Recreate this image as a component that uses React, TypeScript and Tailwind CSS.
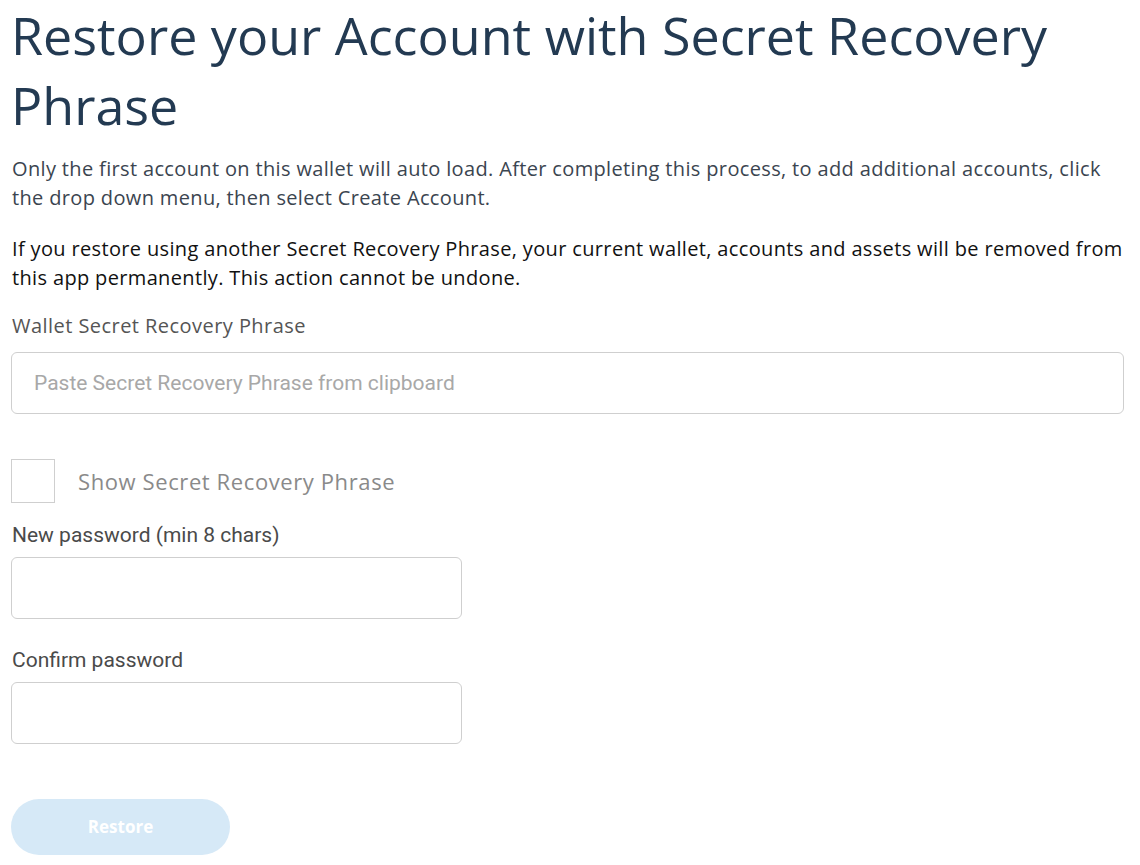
export default function App() {
  return (
    <div className="min-h-screen bg-white pl-[11px] pr-3 pt-0 font-['Open_Sans',sans-serif]">
      <h1 className="text-[52px] leading-[70px] font-normal text-[#233a52]">
        Restore your Account with Secret Recovery Phrase
      </h1>

      <p className="mt-[14px] text-[20px] leading-[29px] tracking-[0.35px] text-[#3b4550] pl-px">
        Only the first account on this wallet will auto load. After completing this process, to add additional
        accounts, click the drop down menu, then select Create Account.
      </p>
      <p className="mt-[22px] text-[20px] leading-[29px] tracking-[0.35px] text-[#111] pl-px">
        If you restore using another Secret Recovery Phrase, your current wallet, accounts and assets will be removed
        from this app permanently. This action cannot be undone.
      </p>

      <label className="block mt-[22px] text-[20px] leading-[24px] tracking-[0.45px] text-[#555] pl-px">
        Wallet Secret Recovery Phrase
      </label>
      <input
        type="text"
        placeholder="Paste Secret Recovery Phrase from clipboard"
        className="mt-[14px] block w-[1113px] h-[62px] rounded-md border border-[#cfcfcf] px-[22px] font-['Roboto',sans-serif] text-[21px] placeholder:text-[#a8a8a8] outline-none"
      />

      <div className="mt-[45px] flex items-center gap-[23px]">
        <span className="block w-11 h-11 border border-[#cfcfcf] bg-white" />
        <span className="text-[22px] tracking-[0.6px] text-[#8a8a8a]">Show Secret Recovery Phrase</span>
      </div>

      <div className="font-['Roboto',sans-serif]">
        <label className="block mt-[20px] text-[21px] leading-[24px] text-[#4a4a4a] pl-px">
          New password (min 8 chars)
        </label>
        <input
          type="password"
          className="mt-[10px] block w-[451px] h-[62px] rounded-md border border-[#cfcfcf] px-4 outline-none"
        />

        <label className="block mt-[29px] text-[21px] leading-[24px] text-[#4a4a4a] pl-px">Confirm password</label>
        <input
          type="password"
          className="mt-[10px] block w-[451px] h-[62px] rounded-md border border-[#cfcfcf] px-4 outline-none"
        />
      </div>

      <button
        type="button"
        disabled
        className="mt-[55px] block w-[219px] h-[56px] rounded-full bg-[#d6e9f7] text-white text-[17px] font-bold"
      >
        Restore
      </button>
    </div>
  );
}
